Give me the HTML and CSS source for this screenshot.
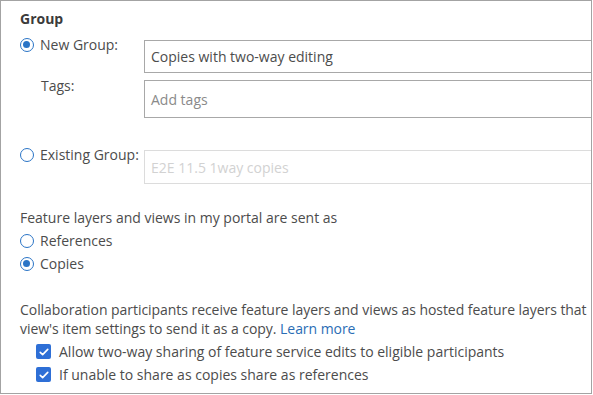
FILE: index.html
```html
<!DOCTYPE html>
<html>
<head>
<meta charset="utf-8">
<link rel="stylesheet" href="styles.css">
</head>
<body>
<div class="frame">
  <div class="content">
    <div class="heading">Group</div>
    <div class="grow r1">
      <label class="opt lab"><span class="radio checked"></span><span>New Group:</span></label>
      <div class="field f1">Copies with two-way editing</div>
    </div>
    <div class="grow r2">
      <div class="sublabel lab">Tags:</div>
      <div class="field f2 placeholder">Add tags</div>
    </div>
    <div class="grow r3">
      <label class="opt lab"><span class="radio"></span><span>Existing Group:</span></label>
      <div class="field f3 disabled">E2E 11.5 1way copies</div>
    </div>
    <div class="section">
      <div class="line">Feature layers and views in my portal are sent as</div>
      <label class="opt"><span class="radio"></span><span>References</span></label>
      <label class="opt"><span class="radio checked"></span><span>Copies</span></label>
    </div>
    <div class="section2">
      <p class="para">Collaboration participants receive feature layers and views as hosted feature layers that<br>view's item settings to send it as a copy. <a class="link">Learn more</a></p>
      <label class="chk"><span class="box"><svg viewBox="0 0 16 16" width="12" height="12"><path d="M3 8.5l3.2 3L13 4.5" fill="none" stroke="#fff" stroke-width="2.2" stroke-linecap="round" stroke-linejoin="round"/></svg></span><span>Allow two-way sharing of feature service edits to eligible participants</span></label>
      <label class="chk"><span class="box"><svg viewBox="0 0 16 16" width="12" height="12"><path d="M3 8.5l3.2 3L13 4.5" fill="none" stroke="#fff" stroke-width="2.2" stroke-linecap="round" stroke-linejoin="round"/></svg></span><span>If unable to share as copies share as references</span></label>
    </div>
  </div>
</div>
</body>
</html>
```
FILE: styles.css
```css
html, body { margin: 0; padding: 0; background: #fff; }
body { font-family: "Open Sans", "Liberation Sans", sans-serif; font-size: 14px; color: #4c4c4c; }
.frame {
  box-sizing: border-box;
  width: 592px; height: 394px;
  border: 1px solid #a3a3a3;
  overflow: hidden;
}
.content { padding: 8px 0 0 19px; width: 600px; }
.heading { font-weight: 700; font-size: 14px; color: #3b3b3b; line-height: 20px; }
.grow { display: flex; align-items: flex-start; }
.grow .lab { width: 124px; flex: none; }
.r1 { margin-top: 11px; }
.r2 { margin-top: 7px; }
.r3 { margin-top: 32px; }
.grow .opt { margin-top: -6px; }
.opt { display: flex; align-items: center; gap: 6px; height: 22px; line-height: 22px; }
.sublabel { box-sizing: border-box; padding-left: 21px; line-height: 22px; margin-top: -5px; }
.radio {
  box-sizing: border-box;
  width: 14px; height: 14px; border-radius: 50%;
  border: 1.5px solid #2a74c6; position: relative; flex: none;
}
.radio.checked::after {
  content: ""; position: absolute; left: 2px; top: 2px;
  width: 7px; height: 7px; border-radius: 50%; background: #2a74c6;
}
.field {
  box-sizing: border-box;
  flex: 1;
  border: 1px solid #a8a8a8;
  padding: 0 6px;
  display: flex; align-items: center;
  color: #4c4c4c;
}
.f1 { height: 33px; }
.f2 { height: 38px; }
.f3 { height: 34px; border-color: #dcdcdc; }
.placeholder { color: #8a8a8a; }
.disabled { color: #d2d2d2; }
.section { margin-top: 23px; }
.line { line-height: 22px; }
.section .opt { height: 23px; }
.section2 { margin-top: 25px; }
.para { margin: 0; line-height: 19px; white-space: nowrap; letter-spacing: -0.05px; }
.link { color: #2a6db5; text-decoration: none; }
.chk { display: flex; align-items: center; gap: 8px; height: 23px; padding-left: 16px; margin-top: 2px; }
.chk + .chk { margin-top: 0; }
.box {
  width: 15px; height: 15px; border-radius: 2px;
  background: #2e6fd6; display: flex; align-items: center; justify-content: center; flex: none;
}
```
